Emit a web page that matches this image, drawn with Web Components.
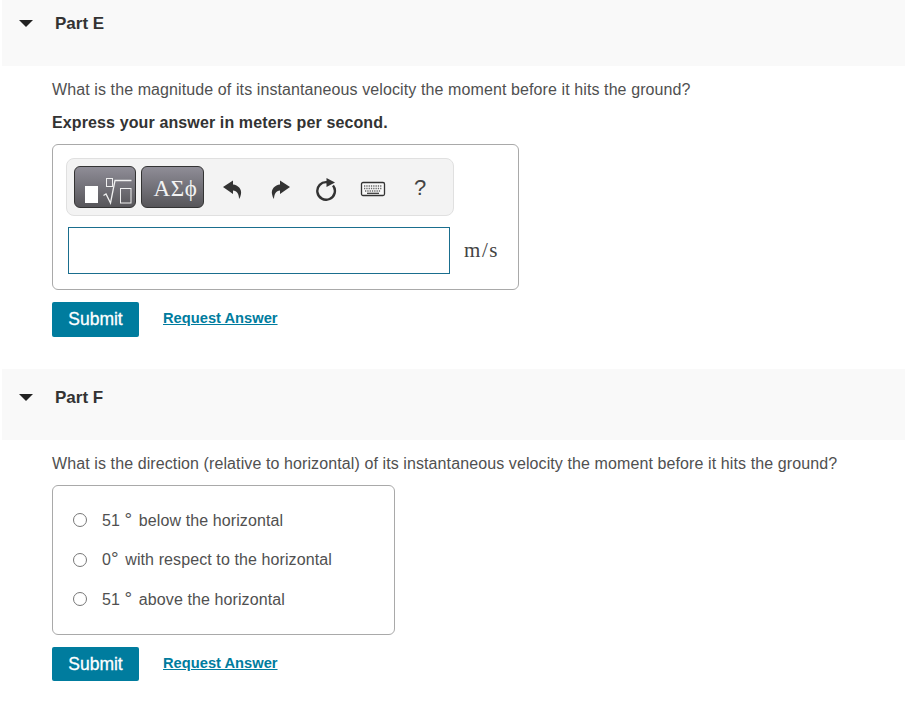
<!DOCTYPE html>
<html>
<head>
<meta charset="utf-8">
<title>Parts</title>
<style>
    body {
        margin: 0;
        background: #fff;
        font-family: "Liberation Sans", Arial, sans-serif;
        font-size: 16px;
        color: #505050;
    }
</style>
</head>
<body>
<part-section title-text="Part E" class="first">
    <question-text>What is the magnitude of its instantaneous velocity the moment before it hits the ground?</question-text>
    <question-text strong>Express your answer in meters per second.</question-text>
    <math-answer unit="m/s"></math-answer>
    <answer-actions></answer-actions>
</part-section>
<part-section title-text="Part F">
    <question-text>What is the direction (relative to horizontal) of its instantaneous velocity the moment before it hits the ground?</question-text>
    <radio-list>
        <radio-option>51 <sup>&#176;</sup> below the horizontal</radio-option>
        <radio-option>0<sup>&#176;</sup> with respect to the horizontal</radio-option>
        <radio-option>51 <sup>&#176;</sup> above the horizontal</radio-option>
    </radio-list>
    <answer-actions></answer-actions>
</part-section>

<script>
class PartSection extends HTMLElement {
    constructor() {
        super();

        this.attachShadow({ mode: 'open' });

        this.shadowRoot.innerHTML = `
            <style>
                :host {
                    display: block;
                }
                header {
                    margin-left: 2px;
                    height: 71px;
                    background: #f9f9f9;
                    display: flex;
                    align-items: flex-start;
                    padding-top: 19px;
                    box-sizing: border-box;
                }
                svg {
                    margin: 6px 0 0 17px;
                    flex: none;
                }
                h2 {
                    margin: -2px 0 0 22px;
                    font-size: 17px;
                    line-height: 24px;
                    font-weight: bold;
                    color: #333;
                }
                .body {
                    padding: 12px 0 0 52px;
                }
            </style>
            <header>
                <svg width="14" height="7" viewBox="0 0 14 7"><path d="M0 0H14L7 7Z" fill="#222"/></svg>
                <h2></h2>
            </header>
            <div class="body"><slot></slot></div>
        `;
    }

    connectedCallback() {
        this.shadowRoot.querySelector('h2').textContent = this.getAttribute('title-text');
        if (this.classList.contains('first')) {
            const header = this.shadowRoot.querySelector('header');
            header.style.height = '66px';
            header.style.paddingTop = '14px';
            this.style.marginBottom = '32px';
        }
    }
}

class QuestionText extends HTMLElement {
    constructor() {
        super();

        this.attachShadow({ mode: 'open' });

        this.shadowRoot.innerHTML = `
            <style>
                :host {
                    display: block;
                    font-size: 16px;
                    letter-spacing: 0.1px;
                    line-height: 24px;
                    margin-bottom: 9px;
                    color: #505050;
                }
                :host([strong]) {
                    font-weight: bold;
                    letter-spacing: 0.12px;
                    color: #333;
                    margin-bottom: 9px;
                }
            </style>
            <slot></slot>
        `;
    }
}

class MathAnswer extends HTMLElement {
    constructor() {
        super();

        this.attachShadow({ mode: 'open' });

        this.shadowRoot.innerHTML = `
            <style>
                :host {
                    display: block;
                    width: 467px;
                    height: 146px;
                    box-sizing: border-box;
                    border: 1px solid #a9a9a9;
                    border-radius: 6px;
                    padding: 13px 0 0 13px;
                }
                .row {
                    display: flex;
                    align-items: center;
                    margin: 11px 0 0 2px;
                }
                .field {
                    width: 382px;
                    height: 47px;
                    box-sizing: border-box;
                    border: 1px solid #1a6e8e;
                    background: #fff;
                }
                .unit {
                    margin-left: 14px;
                    font-family: "Liberation Serif", serif;
                    font-size: 21px;
                    letter-spacing: 1.6px;
                    color: #444;
                    white-space: nowrap;
                }
            </style>
            <math-toolbar></math-toolbar>
            <div class="row">
                <div class="field"></div>
                <span class="unit"></span>
            </div>
        `;
    }

    connectedCallback() {
        this.shadowRoot.querySelector('.unit').textContent = this.getAttribute('unit');
    }
}

class MathToolbar extends HTMLElement {
    constructor() {
        super();

        this.attachShadow({ mode: 'open' });

        this.shadowRoot.innerHTML = `
            <style>
                :host {
                    display: flex;
                    align-items: center;
                    width: 388px;
                    height: 58px;
                    box-sizing: border-box;
                    background: #f3f3f3;
                    border: 1px solid #e0e0e0;
                    border-radius: 8px;
                    padding-left: 7px;
                }
                .tpl {
                    display: flex;
                    align-items: center;
                    justify-content: center;
                    height: 42px;
                    box-sizing: border-box;
                    border: 1px solid #333;
                    border-radius: 6px;
                    background: linear-gradient(#8f8d97, #57565a);
                    color: #f2f2f2;
                    flex: none;
                }
                .a { width: 62px; }
                .b {
                    width: 63px;
                    margin-left: 5px;
                    font-family: "Liberation Serif", serif;
                    font-size: 23px;
                    letter-spacing: 0.6px;
                    padding: 4px 0 0 6px;
                }
                .tools {
                    display: grid;
                    grid-template-columns: 46px 52px 38px 56px 38px;
                    margin-left: 5px;
                    padding-top: 4px;
                    justify-items: center;
                    align-items: center;
                    color: #333;
                }
                .help {
                    font-size: 22px;
                    line-height: 24px;
                    color: #444;
                    margin-top: -3px;
                }
            </style>
            <div class="tpl a">
                <svg width="60" height="40" viewBox="0 0 60 40">
                    <rect x="10" y="19" width="13" height="17" fill="#fff"/>
                    <rect x="31.500" y="11.500" width="6" height="8" fill="none" stroke="#f0f0f0"/>
                    <path d="M28.500 28.500l2.500-1.500 4.500 9 4.500-22.500H56.500" fill="none" stroke="#f0f0f0" stroke-width="1.300"/>
                    <rect x="45.500" y="21.500" width="10.500" height="14.500" fill="none" stroke="#f0f0f0"/>
                </svg>
            </div>
            <div class="tpl b">&#913;&#931;&#981;</div>
            <div class="tools">
                <svg width="20" height="20" viewBox="0 0 20 20"><path d="M1 8L11 1.500V5.500C16 6 20 10 19 15C18.500 17 18 19 17 20C17 15 15 12 11 11.500V15Z" fill="#333"/></svg>
                <svg width="20" height="20" viewBox="0 0 20 20"><path d="M19 8L9 1.500V5.500C4 6 0 10 1 15C1.500 17 2 19 3 20C3 15 5 12 9 11.500V15Z" fill="#333"/></svg>
                <svg width="22" height="24" viewBox="0 0 22 24"><path d="M12 5.200A8.800 8.800 0 1 0 18 8.500" fill="none" stroke="#333" stroke-width="2.400"/><path d="M11.500 1V10L20 5.500Z" fill="#333"/></svg>
                <svg width="26" height="16" viewBox="0 0 26 16">
                    <rect x="1.500" y="1.500" width="23" height="13" rx="1.500" fill="#f8f8f8" stroke="#333" stroke-width="1.300"/>
                    <path d="M4 5h18M4 7.500h18M5 10h16" stroke="#666" stroke-width="1.300" stroke-dasharray="1.300 1"/>
                    <path d="M7 12.300h12" stroke="#333" stroke-width="1.200"/>
                </svg>
                <span class="help">?</span>
            </div>
        `;
    }
}

class AnswerActions extends HTMLElement {
    constructor() {
        super();

        this.attachShadow({ mode: 'open' });

        this.shadowRoot.innerHTML = `
            <style>
                :host {
                    display: flex;
                    align-items: center;
                    margin-top: 12px;
                }
                button {
                    width: 87px;
                    height: 34.500px;
                    border: 0;
                    border-radius: 2px;
                    background: #007c9e;
                    color: #fff;
                    font-family: inherit;
                    font-size: 17.500px;
                    -webkit-text-stroke: 0.3px #fff;
                    padding: 1px 0 0;
                }
                a {
                    margin: -2px 0 0 24px;
                    color: #007c9e;
                    font-size: 14.700px;
                    font-weight: bold;
                    text-decoration: underline;
                }
            </style>
            <button>Submit</button>
            <a href="#">Request Answer</a>
        `;
    }
}

class RadioList extends HTMLElement {
    constructor() {
        super();

        this.attachShadow({ mode: 'open' });

        this.shadowRoot.innerHTML = `
            <style>
                :host {
                    display: flex;
                    flex-direction: column;
                    justify-content: center;
                    gap: 14.500px;
                    width: 343px;
                    height: 150px;
                    box-sizing: border-box;
                    border: 1px solid #a9a9a9;
                    border-radius: 6px;
                    margin-top: 9px;
                    padding: 1px 0 0 20px;
                }
            </style>
            <slot></slot>
        `;
    }
}

class RadioOption extends HTMLElement {
    constructor() {
        super();

        this.attachShadow({ mode: 'open' });

        this.shadowRoot.innerHTML = `
            <style>
                :host {
                    display: flex;
                    align-items: center;
                    height: 25px;
                    font-size: 16px;
                    letter-spacing: 0.1px;
                    color: #505050;
                }
                .dot {
                    width: 14px;
                    height: 14px;
                    box-sizing: border-box;
                    border: 1.500px solid #777;
                    border-radius: 50%;
                    background: #fff;
                    margin: -1px 15px 0 0;
                    flex: none;
                }
                ::slotted(sup) {
                    font-size: 19px;
                    line-height: 0;
                    vertical-align: baseline;
                    margin-right: 2px;
                }
            </style>
            <span class="dot"></span>
            <span><slot></slot></span>
        `;
    }
}

customElements.define('part-section', PartSection);
customElements.define('question-text', QuestionText);
customElements.define('math-answer', MathAnswer);
customElements.define('math-toolbar', MathToolbar);
customElements.define('answer-actions', AnswerActions);
customElements.define('radio-list', RadioList);
customElements.define('radio-option', RadioOption);
</script>
</body>
</html>
